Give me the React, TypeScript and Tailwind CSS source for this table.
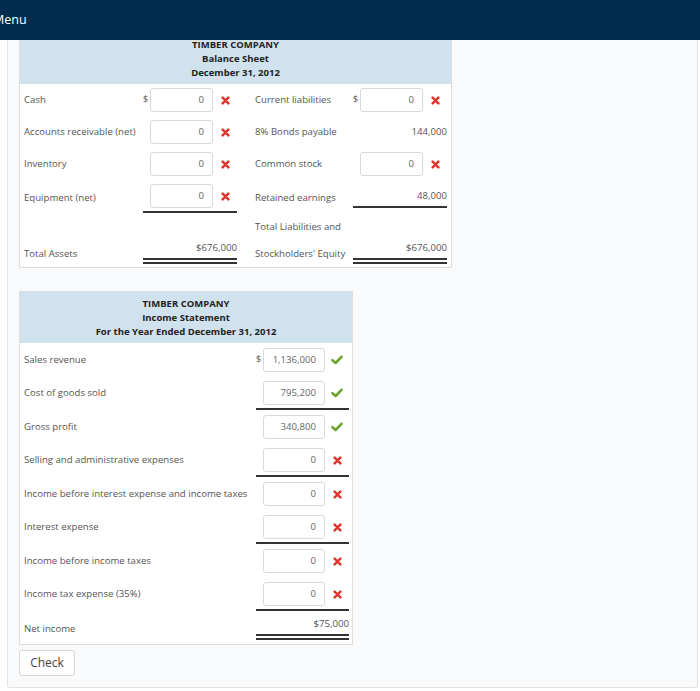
import React from "react";

const font = { fontFamily: '"Open Sans", "Liberation Sans", sans-serif' };

function XMark() {
  return (
    <svg width="9" height="9" viewBox="0 0 10 10" className="shrink-0">
      <path d="M1.8 1.8 L8.2 8.2 M8.2 1.8 L1.8 8.2" stroke="#e2342d" strokeWidth="2.8" strokeLinecap="round" />
    </svg>
  );
}

function CheckMark() {
  return (
    <svg width="12" height="10" viewBox="0 0 12 10" className="shrink-0">
      <path d="M1.5 5.2 L4.6 8 L10.5 1.8" fill="none" stroke="#6ca532" strokeWidth="2.6" strokeLinecap="round" strokeLinejoin="round" />
    </svg>
  );
}

type Mark = "x" | "check";

function Amount({
  value,
  dollar,
  mark,
  line,
  inputW = "w-[63px]",
}: {
  value: string;
  dollar?: boolean;
  mark?: Mark;
  line?: "single";
  inputW?: string;
}) {
  return (
    <div className={`flex flex-col ${line ? "border-b-2 border-[#333] pb-[3px]" : "pb-[4px]"}`}>
      <div className="flex items-center h-[24px]">
        <span className="w-[7px] text-[9px] text-[#555] leading-none -mt-[4px]">{dollar ? "$" : ""}</span>
        <div className={`${inputW} h-[24px] bg-white border border-[#d9d9d9] rounded-[3px] flex items-center justify-end pr-[8px] text-[9.6px] text-[#666]`}>
          {value}
        </div>
        <div className="flex-1 flex justify-center">
          {mark === "x" ? <XMark /> : mark === "check" ? <CheckMark /> : null}
        </div>
      </div>
    </div>
  );
}

function Plain({ value, line }: { value: string; line?: "single" | "double" }) {
  return (
    <div className="w-full flex flex-col">
      <div className="text-right text-[9.6px] text-[#555] leading-[12px]">{value}</div>
      {line === "single" && <div className="h-[2px] bg-[#333] mt-[4px]" />}
      {line === "double" && (
        <div className="mt-[4px] flex flex-col gap-[2px]">
          <div className="h-[2px] bg-[#333]" />
          <div className="h-[2px] bg-[#333]" />
        </div>
      )}
    </div>
  );
}

function Header({ lines, h }: { lines: string[]; h: string }) {
  return (
    <div className={`bg-[#cfe2ed] ${h} flex flex-col items-center justify-end pb-[4px] text-[9.5px] font-bold text-[#222] leading-[14px]`}>
      {lines.map((l) => (
        <div key={l}>{l}</div>
      ))}
    </div>
  );
}

function BalanceSheet() {
  const label = "text-[9.6px] text-[#555] whitespace-nowrap";
  return (
    <div className="w-[433px] bg-white border border-[#ddd] border-t-0">
      <Header lines={["TIMBER COMPANY", "Balance Sheet", "December 31, 2012"]} h="h-[44px]" />
      <div className="pl-[4px] pr-[4px]">
        {[
          ["Cash", "0", true, "Current liabilities", "0", true],
          ["Accounts receivable (net)", "0", false, "8% Bonds payable", "144,000", false],
          ["Inventory", "0", false, "Common stock", "0", false],
        ].map(([l1, v1, d1, l2, v2, d2], i) => (
          <div key={i} className="flex pt-[4px]">
            <div className={`w-[119px] h-[24px] flex items-center ${label}`}>{l1}</div>
            <div className="w-[94px]">
              <Amount value={v1 as string} dollar={d1 as boolean} mark="x" />
            </div>
            <div className="w-[18px]" />
            <div className={`w-[98px] h-[24px] flex items-center ${label}`}>{l2}</div>
            <div className="w-[94px]">
              {i === 1 ? (
                <div className="h-[24px] flex items-center">
                  <Plain value={v2 as string} />
                </div>
              ) : (
                <Amount value={v2 as string} dollar={d2 as boolean} mark="x" />
              )}
            </div>
          </div>
        ))}
        <div className="flex pt-[4px]">
          <div className={`w-[119px] h-[28px] flex items-center ${label}`}>Equipment (net)</div>
          <div className="w-[94px]">
            <Amount value="0" mark="x" line="single" />
          </div>
          <div className="w-[18px]" />
          <div className={`w-[98px] h-[28px] flex items-center ${label}`}>Retained earnings</div>
          <div className="w-[94px] pt-[6px]">
            <Plain value="48,000" line="single" />
          </div>
        </div>
        <div className="flex h-[28px] items-center">
          <div className="w-[231px]" />
          <div className={label}>Total Liabilities and</div>
        </div>
        <div className="flex h-[26px]">
          <div className={`w-[119px] flex items-center ${label}`}>Total Assets</div>
          <div className="w-[94px] pt-[1px]">
            <Plain value="$676,000" line="double" />
          </div>
          <div className="w-[18px]" />
          <div className={`w-[98px] flex items-center ${label}`}>Stockholders' Equity</div>
          <div className="w-[94px] pt-[1px]">
            <Plain value="$676,000" line="double" />
          </div>
        </div>
      </div>
    </div>
  );
}

const incomeRows: { label: string; value: string; mark: Mark; dollar?: boolean; line?: boolean }[] = [
  { label: "Sales revenue", value: "1,136,000", mark: "check", dollar: true },
  { label: "Cost of goods sold", value: "795,200", mark: "check", line: true },
  { label: "Gross profit", value: "340,800", mark: "check" },
  { label: "Selling and administrative expenses", value: "0", mark: "x", line: true },
  { label: "Income before interest expense and income taxes", value: "0", mark: "x" },
  { label: "Interest expense", value: "0", mark: "x", line: true },
  { label: "Income before income taxes", value: "0", mark: "x" },
  { label: "Income tax expense (35%)", value: "0", mark: "x", line: true },
];

function IncomeStatement() {
  return (
    <div className="w-[334px] bg-white border border-[#ddd]">
      <Header lines={["TIMBER COMPANY", "Income Statement", "For the Year Ended December 31, 2012"]} h="h-[51px]" />
      <div className="pl-[4px] pr-[3px]">
        {incomeRows.map((r) => (
          <div key={r.label} className="flex pt-[5px]">
            <div className="flex-1 h-[24px] flex items-center text-[9.6px] text-[#555] whitespace-nowrap">{r.label}</div>
            <div className="w-[93px]">
              <Amount value={r.value} dollar={r.dollar} mark={r.mark} line={r.line ? "single" : undefined} inputW="w-[62px]" />
            </div>
          </div>
        ))}
        <div className="flex h-[33px]">
          <div className="flex-1 flex items-center pt-[4px] text-[9.6px] text-[#555]">Net income</div>
          <div className="w-[93px] pt-[7px]">
            <Plain value="$75,000" line="double" />
          </div>
        </div>
      </div>
    </div>
  );
}

export default function App() {
  return (
    <div className="w-[700px] h-[691px] bg-white overflow-hidden" style={font}>
      <div className="h-[40px] bg-[#022c50] flex items-center">
        <span className="ml-[-7px] text-[12.5px] text-white">Menu</span>
      </div>
      <div className="ml-[7px] w-[691px] h-[648px] bg-[#f9fafb] border border-[#e3e3e3] border-t-0 rounded-b-[3px] pl-[11px]">
        <BalanceSheet />
        <div className="h-[23px]" />
        <IncomeStatement />
        <button className="mt-[5px] w-[56px] h-[26px] bg-white border border-[#d6d6d6] rounded-[3px] text-[12px] text-[#444]">
          Check
        </button>
      </div>
    </div>
  );
}
